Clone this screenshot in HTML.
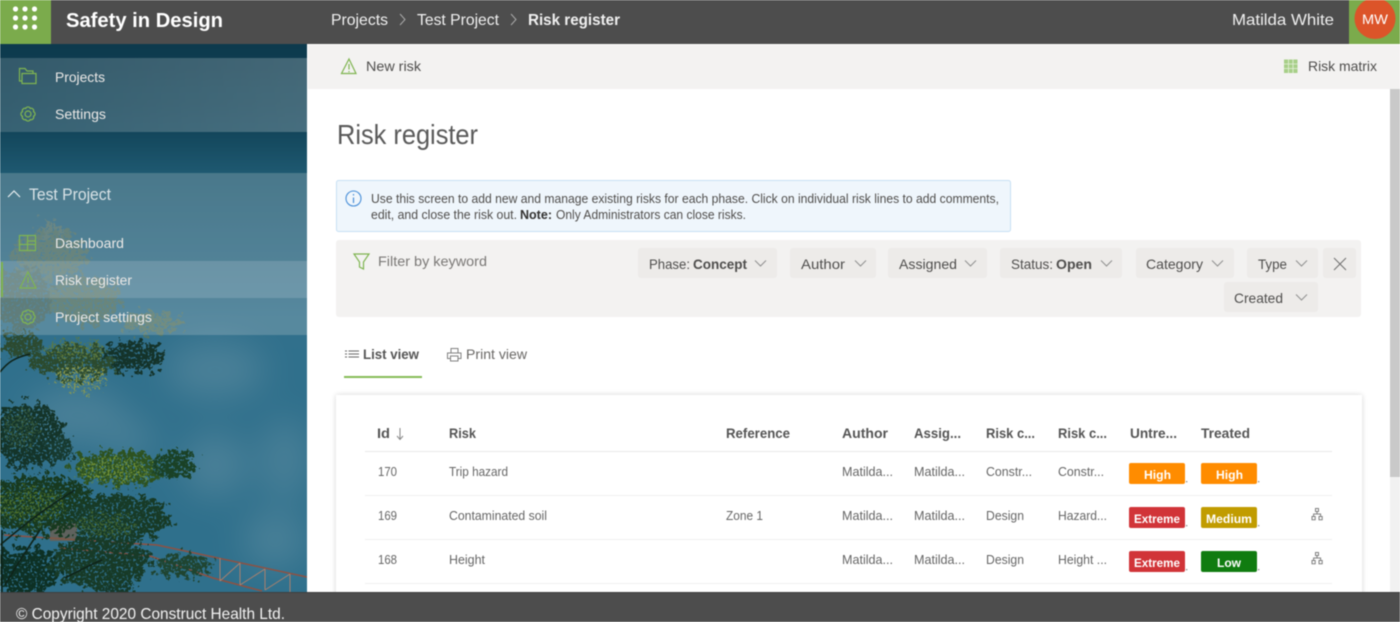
<!DOCTYPE html>
<html lang="en"><head><meta charset="utf-8"><title>Risk register</title>
<style>
html,body{margin:0;padding:0;background:#fff;width:1400px;height:622px;overflow:hidden}
svg{display:block;filter:blur(.45px)}
text{font-family:"Liberation Sans",sans-serif}
.w{fill:#fff}.g{fill:#666;font-size:12.5px}.h{fill:#555;font-size:14px;font-weight:700}
.f{fill:#4f4e4d;font-size:14px}.b{fill:#fff;font-size:12px;font-weight:700}
.ic{fill:none;stroke:#7fb551;stroke-width:1.2}
.gy{fill:none;stroke:#808080;stroke-width:1}
.s{fill:#eae8e6;font-size:14px}
</style></head><body>
<svg width="1400" height="622" viewBox="0 0 1400 622" xmlns="http://www.w3.org/2000/svg">
<defs>
<linearGradient id="sky" x1="0" y1="0" x2="0" y2="1"><stop offset="0" stop-color="#0d3a4d"/><stop offset=".16" stop-color="#13465b"/><stop offset=".24" stop-color="#1f5a72"/><stop offset=".5" stop-color="#31708c"/><stop offset="1" stop-color="#2f708c"/></linearGradient>
<linearGradient id="hz" x1="0" y1="0" x2="1" y2="0"><stop offset="0" stop-color="#fff" stop-opacity="0"/><stop offset="1" stop-color="#fff" stop-opacity=".08"/></linearGradient>
<filter id="leaf" x="-25%" y="-25%" width="150%" height="150%" color-interpolation-filters="sRGB">
<feTurbulence type="fractalNoise" baseFrequency=".14" numOctaves="3" seed="4" result="n"/>
<feDisplacementMap in="SourceGraphic" in2="n" scale="30" xChannelSelector="R" yChannelSelector="G" result="d"/>
<feTurbulence type="fractalNoise" baseFrequency=".42" numOctaves="2" seed="12"/>
<feColorMatrix type="matrix" values="0 0 0 0 0 0 0 0 0 0 0 0 0 0 0 9 0 0 0 -2.9" result="m"/>
<feComposite in="d" in2="m" operator="in"/>
</filter>
<filter id="leaf2" x="-25%" y="-25%" width="150%" height="150%" color-interpolation-filters="sRGB">
<feTurbulence type="fractalNoise" baseFrequency=".16" numOctaves="3" seed="21" result="n"/>
<feDisplacementMap in="SourceGraphic" in2="n" scale="26" xChannelSelector="G" yChannelSelector="R" result="d"/>
<feTurbulence type="fractalNoise" baseFrequency=".5" numOctaves="2" seed="30"/>
<feColorMatrix type="matrix" values="0 0 0 0 0 0 0 0 0 0 0 0 0 0 0 9 0 0 0 -4.6" result="m"/>
<feComposite in="d" in2="m" operator="in"/>
</filter>
<filter id="cloud" x="-40%" y="-40%" width="180%" height="180%"><feGaussianBlur stdDeviation="18"/></filter>
<filter id="sh" x="-5%" y="-10%" width="110%" height="120%"><feGaussianBlur stdDeviation="3"/></filter>
<clipPath id="side"><rect x="0" y="44" width="307" height="548"/></clipPath>
<clipPath id="top"><rect x="1349" y="0" width="51" height="44"/></clipPath>
<path id="gear" d="M5.54 2.3A2.5 2.5 0 0 1 2.3 5.54A2.5 2.5 0 0 1 -2.3 5.54A2.5 2.5 0 0 1 -5.54 2.3A2.5 2.5 0 0 1 -5.54 -2.3A2.5 2.5 0 0 1 -2.3 -5.54A2.5 2.5 0 0 1 2.3 -5.54A2.5 2.5 0 0 1 5.54 -2.3A2.5 2.5 0 0 1 5.54 2.3Z"/>
</defs>
<rect width="1400" height="622" fill="#fff"/>
<g clip-path="url(#side)">
<rect x="0" y="44" width="307" height="548" fill="url(#sky)"/>
<g fill="#8aa8b5" opacity=".3" filter="url(#cloud)">
<ellipse cx="215" cy="370" rx="50" ry="28"/><ellipse cx="75" cy="415" rx="50" ry="26"/><ellipse cx="215" cy="465" rx="32" ry="32"/><ellipse cx="285" cy="460" rx="22" ry="42"/><ellipse cx="275" cy="540" rx="32" ry="28"/><ellipse cx="130" cy="440" rx="25" ry="18"/>
</g>
<!-- crane -->
<g fill="none" stroke="#8f5142" stroke-width="1.5">
<path d="M4 535L157 545L307 577"/><path d="M60 548L150 556L213 578L262 591"/>
<path d="M220 558V581M240 563V585M265 569V590M290 574V592M220 581L240 563M240 585L265 569M265 590L290 574" stroke-width="1" stroke="#a8806e"/>
</g>
<rect x="50" y="523" width="27" height="18" fill="#7a5a45" opacity=".65"/>
<!-- upper tree under panels -->
<g filter="url(#leaf)" opacity=".6">
<ellipse cx="50" cy="255" rx="38" ry="24" fill="#5e6e4a"/>
<ellipse cx="20" cy="300" rx="34" ry="30" fill="#46593d"/>
<ellipse cx="85" cy="300" rx="36" ry="24" fill="#5b6b42"/>
<ellipse cx="150" cy="322" rx="32" ry="10" fill="#6d7a4c"/>
<ellipse cx="50" cy="228" rx="12" ry="6" fill="#66745a"/>
</g>
<!-- lower tree -->
<g filter="url(#leaf)">
<ellipse cx="20" cy="345" rx="22" ry="12" fill="#2c4a30"/>
<ellipse cx="75" cy="362" rx="44" ry="17" fill="#2b4a2e"/>
<ellipse cx="135" cy="356" rx="28" ry="15" fill="#14332a"/>
<ellipse cx="28" cy="435" rx="36" ry="32" fill="#143429"/>
<ellipse cx="60" cy="450" rx="14" ry="12" fill="#173a30"/>
<ellipse cx="120" cy="468" rx="48" ry="17" fill="#2d5220"/>
<ellipse cx="175" cy="464" rx="22" ry="14" fill="#1a4126"/>
<ellipse cx="40" cy="505" rx="56" ry="30" fill="#17391f"/>
<ellipse cx="120" cy="518" rx="50" ry="24" fill="#173a26"/>
<ellipse cx="22" cy="572" rx="40" ry="24" fill="#0d3024"/>
<ellipse cx="100" cy="562" rx="50" ry="26" fill="#173a27"/>
<ellipse cx="185" cy="566" rx="28" ry="12" fill="#1f4430"/>
<ellipse cx="120" cy="592" rx="16" ry="8" fill="#15382a"/>
</g>
<g filter="url(#leaf2)">
<ellipse cx="80" cy="378" rx="26" ry="14" fill="#8b9a50"/>
<ellipse cx="75" cy="350" rx="30" ry="10" fill="#5f7a3c"/>
<ellipse cx="115" cy="470" rx="36" ry="12" fill="#6f8f35"/>
<ellipse cx="30" cy="505" rx="34" ry="18" fill="#4a6d2a"/>
<ellipse cx="105" cy="525" rx="30" ry="12" fill="#3f6230"/>
<ellipse cx="20" cy="430" rx="20" ry="18" fill="#35583a"/>
</g>
<path d="M0 545C30 520 50 505 75 490M2 592V530M5 585C20 560 30 545 40 530M0 372C8 362 14 358 30 354M65 578C80 570 90 565 102 560" fill="none" stroke="#0e2319" stroke-width="1.6"/>
<rect x="0" y="58" width="307" height="74" fill="#c6d2d6" opacity=".2"/>
<rect x="0" y="173" width="307" height="88" fill="#c6d2d6" opacity=".26"/>
<rect x="0" y="261" width="307" height="37" fill="#d5dee2" opacity=".38"/>
<rect x="0" y="298" width="307" height="37" fill="#c6d2d6" opacity=".26"/>
<rect x="0" y="58" width="307" height="74" fill="url(#hz)"/>
<rect x="1" y="262" width="2" height="35" fill="#7fb551"/>
</g>

<!-- sidebar content -->
<g class="ic">
<path d="M21.5 81H19.5V68.5H25L27 71H33V73"/><path d="M22 73.5H36V83.5H22Z"/>
<use href="#gear" x="28" y="114"/><circle cx="28" cy="114" r="3"/>
<path d="M19.5 235.5H35.5V250.5H19.5ZM19.5 244.5H35.5M27.5 235.5V250.5M27.5 241H35.5"/>
<path d="M28 272L36 288H20Z"/><path d="M28 277V283M28 285V286.5"/>
<use href="#gear" x="28" y="317"/><circle cx="28" cy="317" r="3"/>
</g>
<path d="M8 197L14 191L20 197" fill="none" stroke="#e8eef0" stroke-width="1.2"/>
<g class="s">
<text x="55" y="82" textLength="50" lengthAdjust="spacingAndGlyphs">Projects</text>
<text x="55" y="119" textLength="51" lengthAdjust="spacingAndGlyphs">Settings</text>
<text x="29" y="200" textLength="82" lengthAdjust="spacingAndGlyphs" style="font-size:17px;fill:#d8e2e6">Test Project</text>
<text x="55" y="248" textLength="69" lengthAdjust="spacingAndGlyphs">Dashboard</text>
<text x="55" y="285" textLength="77" lengthAdjust="spacingAndGlyphs">Risk register</text>
<text x="55" y="322" textLength="97" lengthAdjust="spacingAndGlyphs">Project settings</text>
</g>

<!-- top bar -->
<rect x="0" y="0" width="1400" height="44" fill="#4d4d4d"/>
<rect x="0" y="0" width="51" height="44" fill="#7bab4c"/>
<g fill="#fff"><circle cx="15.5" cy="9" r="2.6"/><circle cx="25" cy="9" r="2.6"/><circle cx="34.5" cy="9" r="2.6"/><circle cx="15.5" cy="18" r="2.6"/><circle cx="25" cy="18" r="2.6"/><circle cx="34.5" cy="18" r="2.6"/><circle cx="15.5" cy="27" r="2.6"/><circle cx="25" cy="27" r="2.6"/><circle cx="34.5" cy="27" r="2.6"/></g>
<text class="w" x="66" y="27" textLength="157" lengthAdjust="spacingAndGlyphs" style="font-size:20px;font-weight:700">Safety in Design</text>
<g style="font-size:16px" fill="#f0f0f0">
<text x="331" y="25" textLength="57" lengthAdjust="spacingAndGlyphs">Projects</text>
<text x="417" y="25" textLength="82" lengthAdjust="spacingAndGlyphs">Test Project</text>
<text x="528" y="25" textLength="92" lengthAdjust="spacingAndGlyphs" font-weight="700">Risk register</text>
<text x="1232" y="25" textLength="102" lengthAdjust="spacingAndGlyphs">Matilda White</text>
</g>
<path d="M400 14L405 19.5L400 25M511 14L516 19.5L511 25" fill="none" stroke="#aaa" stroke-width="1"/>
<rect x="1349" y="0" width="51" height="44" fill="#7bab4c"/>
<circle cx="1375" cy="18.5" r="20.5" fill="#dc5429" clip-path="url(#top)"/>
<text class="w" x="1362" y="24" textLength="26" lengthAdjust="spacingAndGlyphs" style="font-size:14px">MW</text>
<rect x="308" y="44" width="1092" height="1" fill="#fff"/>

<!-- toolbar -->
<rect x="308" y="45" width="1092" height="44" fill="#f3f2f1"/>
<path d="M349 59L356 73.5H341.5Z" class="ic" stroke="#92c066"/><path d="M349 64V69.5M349 71V72.2" class="ic" stroke-width="1"/>
<text class="f" x="366" y="71" textLength="55" lengthAdjust="spacingAndGlyphs">New risk</text>
<g><rect x="1284" y="59.5" width="13.5" height="13.5" fill="#a7cf88"/><path d="M1284 64H1298M1284 68.5H1298M1288.5 59V73M1293 59V73" stroke="#e6f0dc" stroke-width=".8"/></g>
<text class="f" x="1308" y="71" textLength="69" lengthAdjust="spacingAndGlyphs">Risk matrix</text>

<!-- scrollbar -->
<rect x="1390" y="89" width="10" height="503" fill="#f1f1f1"/>
<rect x="1390" y="89" width="10" height="388" fill="#c9c9c9"/>

<text x="337" y="144" textLength="141" lengthAdjust="spacingAndGlyphs" fill="#5a5a5a" style="font-size:28px">Risk register</text>

<!-- info -->
<rect x="336.5" y="180.5" width="674" height="51" rx="2" fill="#eff6fc" stroke="#c7e0f4"/>
<circle cx="353.5" cy="198.5" r="7.5" fill="none" stroke="#4a90d9" stroke-width="1.1"/>
<path d="M353.5 197.5V203M353.5 194V195.5" stroke="#4a90d9" stroke-width="1.2"/>
<g style="font-size:12.5px" fill="#504e4c">
<text x="371" y="203" textLength="628" lengthAdjust="spacingAndGlyphs">Use this screen to add new and manage existing risks for each phase. Click on individual risk lines to add comments,</text>
<text x="371" y="219" textLength="146" lengthAdjust="spacingAndGlyphs">edit, and close the risk out.</text>
<text x="520" y="219" textLength="32" lengthAdjust="spacingAndGlyphs" font-weight="700" fill="#323130">Note:</text>
<text x="556" y="219" textLength="190" lengthAdjust="spacingAndGlyphs">Only Administrators can close risks.</text>
</g>

<!-- filter -->
<rect x="336" y="240" width="1025" height="77" rx="3" fill="#f3f2f1"/>
<path d="M354 254H369L363.5 262V269L359.5 267V262Z" class="ic" stroke="#92c066" stroke-width="1.3"/>
<text x="378" y="266" textLength="109" lengthAdjust="spacingAndGlyphs" fill="#7a7876" style="font-size:14px">Filter by keyword</text>
<g fill="#edebe9">
<rect x="638" y="248" width="139" height="30" rx="3"/><rect x="790" y="248" width="86" height="30" rx="3"/><rect x="888" y="248" width="99" height="30" rx="3"/><rect x="1000" y="248" width="122" height="30" rx="3"/><rect x="1136" y="248" width="98" height="30" rx="3"/><rect x="1247" y="248" width="71" height="30" rx="3"/><rect x="1323" y="248" width="33" height="30" rx="3"/><rect x="1224" y="282" width="94" height="30" rx="3"/>
</g>
<g class="f">
<text x="649" y="269" textLength="41" lengthAdjust="spacingAndGlyphs">Phase:</text>
<text x="693" y="269" textLength="54" lengthAdjust="spacingAndGlyphs" font-weight="700">Concept</text>
<text x="801" y="269" textLength="44" lengthAdjust="spacingAndGlyphs">Author</text>
<text x="899" y="269" textLength="58" lengthAdjust="spacingAndGlyphs">Assigned</text>
<text x="1011" y="269" textLength="42" lengthAdjust="spacingAndGlyphs">Status:</text>
<text x="1056" y="269" textLength="36" lengthAdjust="spacingAndGlyphs" font-weight="700">Open</text>
<text x="1146" y="269" textLength="57" lengthAdjust="spacingAndGlyphs">Category</text>
<text x="1258" y="269" textLength="29" lengthAdjust="spacingAndGlyphs">Type</text>
<text x="1234" y="303" textLength="49" lengthAdjust="spacingAndGlyphs">Created</text>
</g>
<path d="M755 260.5L760.5 266L766 260.5M855 260.5L860.5 266L866 260.5M965 260.5L970.5 266L976 260.5M1101 260.5L1106.5 266L1112 260.5M1212 260.5L1217.5 266L1223 260.5M1296 260.5L1301.5 266L1307 260.5M1296 294.5L1301.5 300L1307 294.5" fill="none" stroke="#8f8f8f" stroke-width="1"/>
<path d="M1334 258L1346 270M1346 258L1334 270" fill="none" stroke="#707070" stroke-width="1"/>

<!-- tabs -->
<path d="M345 351H347M345 354H347M345 357H347M348.5 351H359M348.5 354H359M348.5 357H359" stroke="#666" stroke-width="1" fill="none"/>
<text x="363" y="359" textLength="56" lengthAdjust="spacingAndGlyphs" fill="#555" font-weight="700" style="font-size:14px">List view</text>
<rect x="344" y="376" width="78" height="2" fill="#86bb57"/>
<path d="M451 353V348.5H458V353M450.5 358.5H447.5V353H461V358.5H458M450.5 356H458V361H450.5Z" class="gy"/>
<text x="466" y="359" textLength="61" lengthAdjust="spacingAndGlyphs" fill="#6a6866" style="font-size:14px">Print view</text>

<!-- card -->
<rect x="336" y="395" width="1026" height="205" fill="#000" opacity=".16" filter="url(#sh)"/>
<rect x="336" y="395" width="1026" height="200" fill="#fff"/>
<g class="h">
<text x="377" y="438" textLength="13" lengthAdjust="spacingAndGlyphs">Id</text>
<text x="449" y="438" textLength="27" lengthAdjust="spacingAndGlyphs">Risk</text>
<text x="726" y="438" textLength="64" lengthAdjust="spacingAndGlyphs">Reference</text>
<text x="842" y="438" textLength="46" lengthAdjust="spacingAndGlyphs">Author</text>
<text x="914" y="438" textLength="47" lengthAdjust="spacingAndGlyphs">Assig...</text>
<text x="986" y="438" textLength="49" lengthAdjust="spacingAndGlyphs">Risk c...</text>
<text x="1058" y="438" textLength="49" lengthAdjust="spacingAndGlyphs">Risk c...</text>
<text x="1130" y="438" textLength="47" lengthAdjust="spacingAndGlyphs">Untre...</text>
<text x="1201" y="438" textLength="49" lengthAdjust="spacingAndGlyphs">Treated</text>
</g>
<path d="M400 428V439M397 436L400 439.5L403 436" fill="none" stroke="#888" stroke-width="1"/>
<path d="M365 451.5H1332" stroke="#e8e8e8"/><path d="M365 495.5H1332M365 539.5H1332M365 583.5H1332" stroke="#f0f0f0"/>
<g class="g">
<text x="378" y="476" textLength="19" lengthAdjust="spacingAndGlyphs">170</text><text x="449" y="476" textLength="59" lengthAdjust="spacingAndGlyphs">Trip hazard</text><text x="842" y="476" textLength="51" lengthAdjust="spacingAndGlyphs">Matilda...</text><text x="914" y="476" textLength="51" lengthAdjust="spacingAndGlyphs">Matilda...</text><text x="986" y="476" textLength="46" lengthAdjust="spacingAndGlyphs">Constr...</text><text x="1058" y="476" textLength="46" lengthAdjust="spacingAndGlyphs">Constr...</text>
<text x="378" y="520" textLength="19" lengthAdjust="spacingAndGlyphs">169</text><text x="449" y="520" textLength="98" lengthAdjust="spacingAndGlyphs">Contaminated soil</text><text x="726" y="520" textLength="37" lengthAdjust="spacingAndGlyphs">Zone 1</text><text x="842" y="520" textLength="51" lengthAdjust="spacingAndGlyphs">Matilda...</text><text x="914" y="520" textLength="51" lengthAdjust="spacingAndGlyphs">Matilda...</text><text x="986" y="520" textLength="38" lengthAdjust="spacingAndGlyphs">Design</text><text x="1058" y="520" textLength="49" lengthAdjust="spacingAndGlyphs">Hazard...</text>
<text x="378" y="564" textLength="19" lengthAdjust="spacingAndGlyphs">168</text><text x="449" y="564" textLength="36" lengthAdjust="spacingAndGlyphs">Height</text><text x="842" y="564" textLength="51" lengthAdjust="spacingAndGlyphs">Matilda...</text><text x="914" y="564" textLength="51" lengthAdjust="spacingAndGlyphs">Matilda...</text><text x="986" y="564" textLength="38" lengthAdjust="spacingAndGlyphs">Design</text><text x="1058" y="564" textLength="49" lengthAdjust="spacingAndGlyphs">Height ...</text>
</g>
<rect x="1129" y="463" width="56" height="21" rx="2" fill="#ff8c00"/><rect x="1201" y="463" width="56" height="21" rx="2" fill="#ff8c00"/>
<rect x="1129" y="507" width="56" height="21" rx="2" fill="#d13438"/><rect x="1201" y="507" width="56" height="21" rx="2" fill="#c19c00"/>
<rect x="1129" y="551" width="56" height="21" rx="2" fill="#d13438"/><rect x="1201" y="551" width="56" height="21" rx="2" fill="#107c10"/>
<g class="b">
<text x="1144" y="479" textLength="27" lengthAdjust="spacingAndGlyphs">High</text><text x="1216" y="479" textLength="27" lengthAdjust="spacingAndGlyphs">High</text>
<text x="1134" y="523" textLength="46" lengthAdjust="spacingAndGlyphs">Extreme</text><text x="1206" y="523" textLength="46" lengthAdjust="spacingAndGlyphs">Medium</text>
<text x="1134" y="567" textLength="46" lengthAdjust="spacingAndGlyphs">Extreme</text><text x="1217" y="567" textLength="24" lengthAdjust="spacingAndGlyphs">Low</text>
</g>
<g fill="#888"><rect x="1186" y="481" width="1.3" height="1.3"/><rect x="1258" y="481" width="1.3" height="1.3"/><rect x="1186" y="525" width="1.3" height="1.3"/><rect x="1258" y="525" width="1.3" height="1.3"/><rect x="1186" y="569" width="1.3" height="1.3"/><rect x="1258" y="569" width="1.3" height="1.3"/></g>
<g class="gy" stroke-width=".9">
<path d="M1315.5 508.5h3v3h-3zM1312 516.5h3.2v3.2H1312zM1319 516.5h3.2v3.2H1319zM1317 511.5V514M1313.6 516.5V514H1320.6V516.5"/>
<path d="M1315.5 552.5h3v3h-3zM1312 560.5h3.2v3.2H1312zM1319 560.5h3.2v3.2H1319zM1317 555.5V558M1313.6 560.5V558H1320.6V560.5"/>
</g>

<!-- footer -->
<rect x="0" y="592" width="1400" height="30" fill="#4d4d4d"/>
<rect x="0" y="592" width="1400" height="1" fill="#3e3e3e"/>
<text x="16" y="619" textLength="269" lengthAdjust="spacingAndGlyphs" fill="#f2f2f2" style="font-size:16px">© Copyright 2020 Construct Health Ltd.</text>
</svg>
</body></html>
